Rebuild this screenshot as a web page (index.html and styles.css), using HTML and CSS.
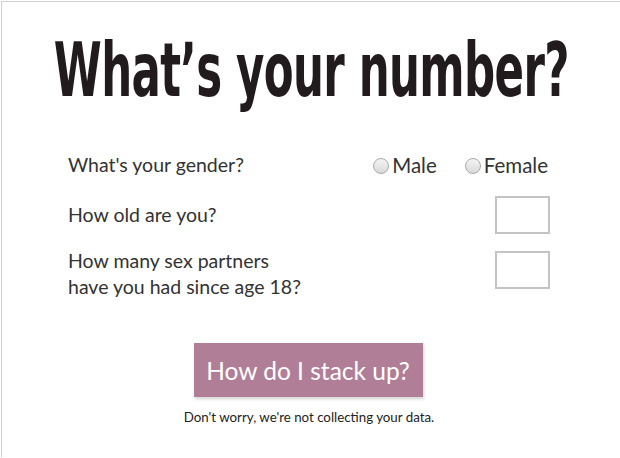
FILE: index.html
```html
<!DOCTYPE html>
<html lang="en">
<head>
    <meta charset="UTF-8">
    <meta name="viewport" content="width=device-width, initial-scale=1.0">
    <title>What's your number?</title>
    <link rel="stylesheet" href="styles.css">
</head>
<body>
    <div class="page">
        <h1 class="title"><span>What’s your number?</span></h1>

        <form class="quiz" onsubmit="return false;">
            <div class="row">
                <label class="question">What's your gender?</label>
                <div class="choices">
                    <label class="choice"><input type="radio" name="gender" value="male">Male</label>
                    <label class="choice"><input type="radio" name="gender" value="female">Female</label>
                </div>
            </div>

            <div class="row row-age">
                <label class="question" for="age">How old are you?</label>
                <input type="text" id="age" class="box">
            </div>

            <div class="row row-partners">
                <label class="question" for="partners">How many sex partners<br>have you had since age 18?</label>
                <input type="text" id="partners" class="box">
            </div>

            <div class="actions">
                <button type="submit" class="btn">How do I stack up?</button>
                <p class="note">Don't worry, we're not collecting your data.</p>
            </div>
        </form>
    </div>
</body>
</html>
```

FILE: styles.css
```css
:root {
    --text-color: #333;
    --button-color: #b17e98;
    --box-border: #c4c4c4;
}

* {
    box-sizing: border-box;
}

body {
    margin: 0;
    background: #fff;
    font-family: Lato, 'Open Sans', sans-serif;
    color: var(--text-color);
}

.page {
    margin: 1px 0 0 1px;
    border-top: 1px solid #d0d0d0;
    border-left: 1px solid #d0d0d0;
    height: 456px;
    overflow: hidden;
}

.title {
    display: flex;
    justify-content: center;
    margin: 0;
    padding-top: 26px;
    height: 150px;
    white-space: nowrap;
    font-family: 'DejaVu Sans Condensed', 'DejaVu Sans', sans-serif;
    font-weight: bold;
    font-size: 75px;
    line-height: 84px;
    color: #221b1e;
    letter-spacing: -1px;
}

.title span {
    flex: none;
    transform: scaleX(0.645);
}

.quiz {
    width: 482px;
    margin: 0 0 0 66px;
}

.row {
    display: flex;
    justify-content: space-between;
    align-items: center;
    font-size: 19.5px;
}

.row-age {
    margin-top: 18px;
}

.row-partners {
    margin-top: 14px;
    align-items: flex-start;
}

.question {
    line-height: 26px;
}

.choices {
    display: flex;
    gap: 28px;
    padding-right: 2px;
    font-size: 20.5px;
}

.choice {
    display: flex;
    align-items: center;
    gap: 3px;
}

.choice input {
    appearance: none;
    -webkit-appearance: none;
    width: 16px;
    height: 16px;
    margin: 2px 0 0 0;
    border: 1px solid #a9a9a9;
    border-radius: 50%;
    background: linear-gradient(#f4f4f4, #d9d9d9);
}

.box {
    flex: none;
    width: 55px;
    height: 38px;
    margin: 0;
    border: 2px solid var(--box-border);
    border-radius: 0;
    background: #fff;
}

.row-partners .box {
    margin-top: 3px;
}

.actions {
    margin-top: 43px;
    text-align: center;
}

.btn {
    width: 229px;
    height: 54px;
    margin-left: -2px;
    border: none;
    background-color: var(--button-color);
    color: #fff;
    font-family: Lato, sans-serif;
    font-size: 24.5px;
    box-shadow: 1px 2px 3px rgba(0, 0, 0, 0.18);
    cursor: pointer;
}

.note {
    margin: 12px 0 0 0;
    font-size: 13.3px;
    color: #222;
}
```
